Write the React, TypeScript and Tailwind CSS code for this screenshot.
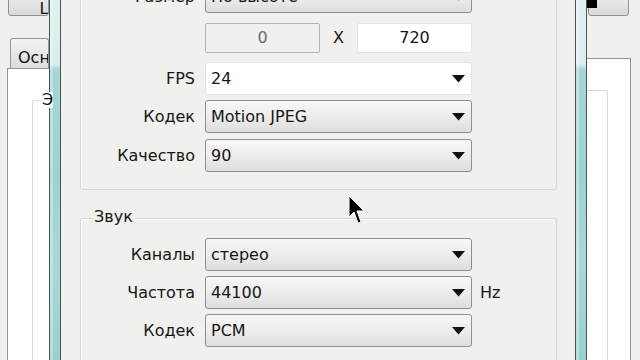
import React from 'react'

const font = { fontFamily: '"DejaVu Sans", "Noto Sans", sans-serif' }

const Arrow = () => (
  <svg width="13" height="8" viewBox="0 0 13 8" className="shrink-0">
    <path d="M0 0 H13 L6.5 7.5 Z" fill="#111" />
  </svg>
)

const Combo = ({ value, white }: { value: string; white?: boolean }) => (
  <div
    className={`w-[267px] h-full flex items-center justify-between pl-[5px] pr-[6px] rounded-[3px] border ${
      white
        ? 'bg-white border-[#e2e4e4]'
        : 'border-[#8d9090] bg-gradient-to-b from-[#f7f7f7] via-[#ededed] to-[#dedede]'
    }`}
  >
    <span className="text-[16px] text-[#161616] leading-none">{value}</span>
    <Arrow />
  </div>
)

const Row = ({ label, children, h = 'h-[33px]', mt = '' }: { label: string; children: React.ReactNode; h?: string; mt?: string }) => (
  <div className={`flex items-center ${h} ${mt}`}>
    <div className="w-[114px] text-right text-[16px] text-[#161616] leading-none">{label}</div>
    <div className="ml-[10px] h-full flex items-center">{children}</div>
  </div>
)

const Frame = () => (
  <div className="w-[12px] shrink-0 flex border-x border-[#47545a] bg-[linear-gradient(to_bottom,#deefef_0px,#dbeeee_64px,#a5d6d2_70px,#9fd2ce_180px,#a9d9d5_260px,#9ccfcb_100%)]">
    <div className="w-[3px] bg-white/30" />
  </div>
)

export default function App() {
  return (
    <div className="w-[640px] h-[360px] overflow-hidden relative flex bg-[#f0f0ef]" style={font}>
      {/* background window, left */}
      <div className="w-[49px] shrink-0 flex flex-col">
        <div className="ml-[8px] -mt-[10px] h-[26px] rounded-[3px] border border-[#8e9292] bg-gradient-to-b from-[#f2f2f2] to-[#d9d9d9] flex justify-end items-start overflow-hidden">
          <span className="text-[16px] leading-none mt-[10px] -mr-[4px] text-[#111]">Ц</span>
        </div>
        <div className="ml-[10px] mt-[22px] h-[30px] rounded-t-[3px] border border-b-0 border-[#8e9898] bg-gradient-to-b from-[#f4f4f4] to-[#dcdcdc] pl-[7px] pt-[7px] overflow-hidden">
          <span className="text-[16px] leading-none text-[#111] whitespace-nowrap">Осн</span>
        </div>
        <div className="ml-[7px] flex-1 bg-white border-l border-t border-[#8e9898] flex flex-col">
          <div className="ml-[24px] mt-[31px] flex-1 border-l border-t border-[#d6dada] rounded-tl-[3px] relative">
            <span className="absolute -top-[9px] left-[9px] text-[16px] leading-none bg-white text-[#111]">Э</span>
          </div>
        </div>
      </div>

      <Frame />

      {/* dialog */}
      <div className="w-[514px] shrink-0 bg-[#f0f0ee] pl-[19px] pr-[18px] flex flex-col">
        <div className="-mt-[30px] pt-[9px] pb-[17px] border border-[#d2d7d7] rounded-[3px] shadow-[inset_1px_1px_0_#fff]">
          <Row label="Размер">
            <Combo value="По высоте" />
          </Row>
          <Row label="" h="h-[30px]" mt="mt-[10px]">
            <div className="w-[115px] h-full flex items-center justify-center border border-[#b3b6b6] rounded-[2px] bg-[#f0f0f0] text-[16px] text-[#6e6e6e]">0</div>
            <div className="w-[37px] text-center text-[16px] text-[#161616]">X</div>
            <div className="w-[115px] h-full flex items-center justify-center border border-[#e4e6e6] rounded-[2px] bg-white text-[16px] text-[#161616]">720</div>
          </Row>
          <Row label="FPS" mt="mt-[9px]">
            <Combo value="24" white />
          </Row>
          <Row label="Кодек" mt="mt-[5px]">
            <Combo value="Motion JPEG" />
          </Row>
          <Row label="Качество" mt="mt-[6px]">
            <Combo value="90" />
          </Row>
        </div>

        <div className="mt-[28px] relative flex-1 pt-[19px] border border-b-0 border-[#d2d7d7] rounded-t-[3px] shadow-[inset_1px_1px_0_#fff]">
          <span className="absolute -top-[10px] left-[11px] px-[2px] bg-[#f0f0ee] text-[16px] leading-none text-[#161616]">Звук</span>
          <Row label="Каналы">
            <Combo value="стерео" />
          </Row>
          <Row label="Частота" mt="mt-[5px]">
            <Combo value="44100" />
            <span className="ml-[8px] text-[16px] text-[#161616]">Hz</span>
          </Row>
          <Row label="Кодек" mt="mt-[5px]">
            <Combo value="PCM" />
          </Row>
        </div>
      </div>

      <Frame />

      {/* background window, right */}
      <div className="flex-1 flex flex-col relative">
        <div className="absolute left-0 top-0 w-[10px] h-[8px] bg-black" />
        <div className="ml-[1px] mr-[11px] -mt-[10px] h-[26px] rounded-[3px] border border-[#8e9292] bg-gradient-to-b from-[#f2f2f2] to-[#d9d9d9]" />
        <div className="mt-[42px] mr-[9px] flex-1 bg-white border-t border-r border-[#8e9898] flex flex-col">
          <div className="mt-[31px] mr-[22px] flex-1 border-t border-r border-[#d6dada] rounded-tr-[3px]" />
        </div>
      </div>

      {/* mouse pointer */}
      <svg className="absolute left-[348px] top-[195px]" width="18" height="31" viewBox="0 0 18 31">
        <path d="M1 1 L1 22 L6 17 L10 28 L13 27 L9 16 L16 16 Z" fill="#000" stroke="#fff" strokeWidth="1" />
      </svg>
    </div>
  )
}
